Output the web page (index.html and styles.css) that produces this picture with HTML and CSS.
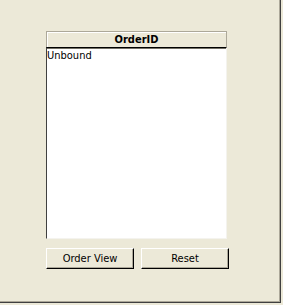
FILE: index.html
```html
<!DOCTYPE html>
<html>
<head>
<meta charset="utf-8">
<link rel="stylesheet" href="styles.css">
</head>
<body>
<div class="frame">
  <div class="grid">
    <div class="grid-header">OrderID</div>
    <div class="grid-body">
      <div class="row">Unbound</div>
    </div>
  </div>
  <div class="buttons">
    <button class="btn">Order View</button>
    <button class="btn">Reset</button>
  </div>
</div>
</body>
</html>
```
FILE: styles.css
```css
html, body {
  margin: 0;
  padding: 0;
  background: #ece9d8;
  font-family: "DejaVu Sans Condensed", "Liberation Sans", Arial, sans-serif;
  font-size: 11px;
  color: #000;
}
.frame {
  box-sizing: border-box;
  width: 281px;
  height: 303px;
  padding: 31px 0 0 46px;
  border-right: 1px solid #404040;
  border-bottom: 1px solid #404040;
  box-shadow: inset -1px -1px 0 #aca899;
}
.grid {
  width: 181px;
  display: flex;
  flex-direction: column;
}
.grid-header {
  box-sizing: border-box;
  height: 16px;
  border: 1px solid #aca899;
  border-bottom: none;
  box-shadow: inset 1px 1px 0 #fff;
  font-weight: bold;
  font-size: 11px;
  line-height: 15px;
  text-align: center;
}
.grid-body {
  box-sizing: border-box;
  height: 192px;
  background: #fff;
  border-top: 1px solid #000;
  border-left: 1px solid #404040;
  border-right: 1px solid #f4f3ee;
  border-bottom: 1px solid #f4f3ee;
  box-shadow: inset 0 1px 0 #716f64;
}
.row {
  padding: 1px 0 0 0;
  line-height: 13px;
  font-size: 11px;
}
.buttons {
  display: flex;
  gap: 7px;
  margin-top: 9px;
}
.btn {
  box-sizing: border-box;
  width: 88px;
  height: 21px;
  margin: 0;
  padding: 0 0 1px 0;
  background: #ece9d8;
  font-family: "DejaVu Sans Condensed", "Liberation Sans", Arial, sans-serif;
  font-size: 11px;
  color: #000;
  border-top: 1px solid #fff;
  border-left: 1px solid #fff;
  border-right: 1px solid #000;
  border-bottom: 1px solid #000;
  box-shadow: inset -1px -1px 0 #aca899;
}
```
